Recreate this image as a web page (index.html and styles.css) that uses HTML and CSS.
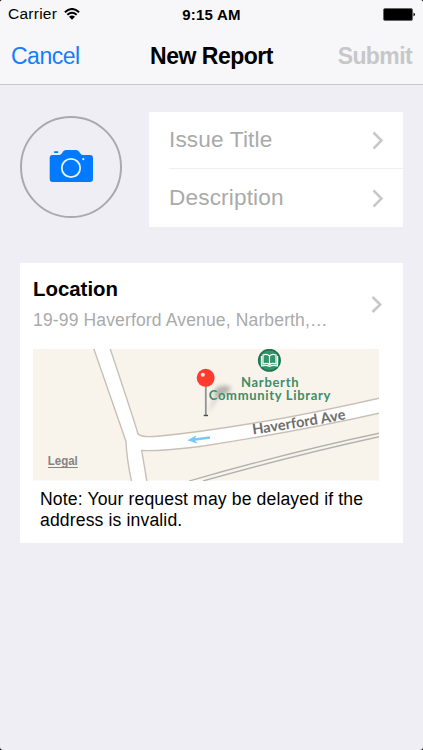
FILE: index.html
```html
<!DOCTYPE html>
<html lang="en">
<head>
<meta charset="utf-8">
<title>New Report</title>
<link rel="stylesheet" href="styles.css">
</head>
<body>
<div class="screen">
  <header class="top">
    <div class="status">
      <div class="carrier"><span>Carrier</span>
        <svg class="wifi" width="16" height="12" viewBox="0 0 16 12"><path d="M.9 4.2Q8-2.3 15.1 4.2M3.3 6.8Q8 2.5 12.7 6.8" fill="none" stroke="#000" stroke-width="1.9"/><path d="M5 8.8Q8 6.2 11 8.8L8 11.8Z"/></svg>
      </div>
      <div class="clock">9:15 AM</div>
      <svg class="battery" width="33" height="13" viewBox="0 0 33 13"><rect x=".5" y=".5" width="29" height="12" rx="1.5" fill="#000" stroke="#666"/><path d="M30.5 4.5Q33.5 6.5 30.5 8.5Z"/></svg>
    </div>
    <nav class="nav">
      <span class="cancel">Cancel</span>
      <h1><span class="title">New Report</span></h1>
      <span class="submit">Submit</span>
    </nav>
  </header>
  <main>
    <section class="intro">
      <div class="photo">
        <svg width="44" height="33" viewBox="0 0 44 33"><path d="M3.5 5H10Q12 5 13.2 3L14 1.5Q15 0 17 0H27Q29 0 30 1.5L31 3Q32 5 34 5H41Q44 5 44 8V29Q44 32 41 32H3.5Q.7 32 .7 29V8Q.7 5 3.5 5ZM5.2 1.2H9.2V3H5.2Z" fill="#007aff"/><circle cx="22" cy="18" r="9.2" fill="none" stroke="#e6f3fb" stroke-width="1.8"/><circle cx="34.3" cy="9.2" r="1.1" fill="#e6f3fb"/></svg>
      </div>
      <div class="fields">
        <div class="field"><span class="issue">Issue Title</span><svg class="chevron" width="12" height="19" viewBox="0 0 12 19"><path d="M1.5 1.5L9.5 9.5L1.5 17.5"/></svg></div>
        <div class="field"><span class="desc">Description</span><svg class="chevron" width="12" height="19" viewBox="0 0 12 19"><path d="M1.5 1.5L9.5 9.5L1.5 17.5"/></svg></div>
      </div>
    </section>
    <section class="location">
      <div class="place">
        <div><h2><span>Location</span></h2><p class="address"><span>19-99 Haverford Avenue, Narberth,…</span></p></div>
        <svg class="chevron" width="12" height="19" viewBox="0 0 12 19"><path d="M1.5 2L9.2 9.5L1.5 17"/></svg>
      </div>
      <svg class="map" width="346" height="132" viewBox="33 349 346 132">
        <defs><filter id="soft" x="-50%" y="-50%" width="200%" height="200%"><feGaussianBlur stdDeviation="2.2"/></filter>
        <path id="street" d="M253 434.4Q300 428 350 418.4"/></defs>
        <rect x="33" y="348" width="346" height="132.5" fill="#f8f4ec"/>
        <g class="roads">
        <path d="M93.2 347L126 441.5Q126.5 458 131.7 482H147L141.7 450.5Q160 451.5 205 445.7Q300 431 380 413V398Q300 416 253 423.2Q200 432 160 436Q142 438 138 434Q136 426 109.6 347Z" fill="#fff" stroke="#c8c0b5" stroke-width="1.4"/>
        <g fill="none" stroke="#b4b1ae" stroke-width="1.3"><path d="M189 481Q290 452 380 433"/><path d="M203 481Q295 455 380 436.5"/></g>
        </g>
        <path d="M191 439.9L210 437.6" stroke="#78c8fa" stroke-width="2.5"/><path d="M187.5 440.2L196.5 435.3L194.5 439.6L197.5 443.8Z" fill="#78c8fa"/>
        <path d="M207 415L215 397Q212 389 219 386.5Q227 384 231 388Q230 394 217 398Z" fill="#444" opacity=".36" filter="url(#soft)"/>
        <circle cx="269.4" cy="360.3" r="11.5" fill="#247653"/><circle cx="269.4" cy="360.3" r="10.4" fill="#35936a" stroke="#1f6949" stroke-width=".8"/>
        <path d="M263 355Q267 353.5 269.5 356Q272 353.5 276 355V364Q272 362.5 269.5 364.7Q267 362.5 263 364ZM269.5 356V364.5M261.5 356V366Q266.5 364.7 269.5 366.5Q272.5 364.7 277.5 366V356" fill="none" stroke="#fff" stroke-width="1.2"/>
        <g class="library"><text x="241" y="386.8" textLength="57.5">Narberth</text><text x="208.8" y="400.3" textLength="121.5">Community Library</text></g>
        <text class="street"><textPath href="#street" textLength="94.5">Haverford Ave</textPath></text>
        <path d="M205.8 386V415" stroke="#929292" stroke-width="1.8"/><path d="M203.7 415.5H208" stroke="#4b4b4b" stroke-width="1.4"/>
        <circle cx="205.7" cy="377.8" r="9" fill="#ff3b30"/><circle cx="202.8" cy="374.8" r="2" fill="#ffe8e5"/>
        <text class="legal" x="47.8" y="465.2" textLength="30" lengthAdjust="spacingAndGlyphs">Legal</text><path d="M48 467.5H77.8" stroke="#858382"/>
      </svg>
      <p class="note"><span class="line1">Note: Your request may be delayed if the</span><br><span class="line2">address is invalid.</span></p>
    </section>
  </main>
</div>
</body>
</html>
```
FILE: styles.css
```css
* { box-sizing: border-box; }
body { margin: 0; background: #000; font-family: "Liberation Sans", Arial, sans-serif; color: #000; }
h1, h2, p { margin: 0; }
svg { display: block; flex: none; }
.screen { height: 750px; background: #efeef4; border-radius: 3px; overflow: hidden; }
.top { height: 85px; background: #f7f7f9; border-bottom: 1px solid #c8c7cc; }
.status { height: 28px; padding: 0 8px; display: grid; grid-template-columns: 1fr auto 1fr; align-items: center; }
.carrier { display: flex; align-items: center; gap: 7px; font-size: 15.5px; letter-spacing: .25px; }
.clock { font-size: 15px; font-weight: 700; letter-spacing: .2px; }
.battery { justify-self: end; margin-right: -1px; }
.nav { height: 56px; padding: 0 11px; display: grid; grid-template-columns: 1fr auto 1fr; align-items: center; font-size: 23px; line-height: 28px; letter-spacing: -.5px; }
.cancel { color: #147efb; }
h1 { font-size: 23px; letter-spacing: -.5px; }
.submit { justify-self: end; font-weight: 700; color: #c7c7ca; letter-spacing: -.6px; }
.intro { display: flex; justify-content: space-between; padding: 27px 20px 0; height: 178px; }
.photo { width: 102px; height: 102px; margin-top: 4px; border: 2px solid #aaa9ad; border-radius: 50%; display: flex; align-items: center; justify-content: center; padding-bottom: 1px; }
.fields { width: 254px; height: 115px; background: #fff; padding-left: 20px; }
.field { height: 56px; display: flex; align-items: center; justify-content: space-between; padding-right: 19px; font-size: 22.6px; letter-spacing: .15px; color: #aaa; }
.field + .field { border-top: 1px solid #efeff1; height: 59px; }
.chevron path { fill: none; stroke: #c7c7cc; stroke-width: 2.5; }
.location { margin: 0 20px; height: 280px; background: #fff; padding: 0 20px 0 13px; }
.place { height: 86px; display: flex; justify-content: space-between; padding-top: 14px; }
.place .chevron { margin: 18px 0 0; }
h2 { font-size: 20.4px; line-height: 24px; }
.address { font-size: 17.5px; line-height: 22px; margin-top: 8px; color: #aaa; white-space: nowrap; letter-spacing: .15px; }
.note { padding: 8px 0 0 7px; font-size: 17.6px; line-height: 20.5px; white-space: nowrap; letter-spacing: .13px; }
.library { fill: #408d69; font: 700 13px Lato, sans-serif; }
.street { fill: #706e6c; font: 700 14.6px Lato, sans-serif; }
.legal { fill: #858382; font: 700 12px "Liberation Sans", sans-serif; }
```
